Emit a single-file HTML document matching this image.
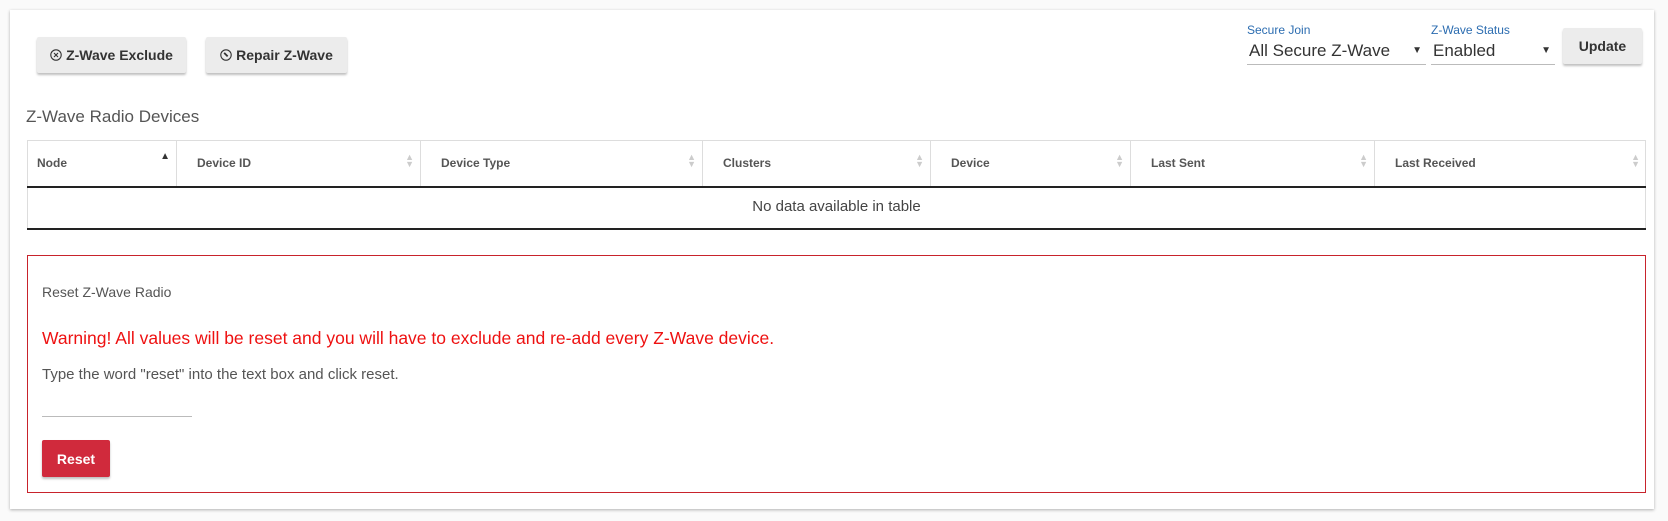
<!DOCTYPE html>
<html><head><meta charset="utf-8"><style>
*{box-sizing:border-box;margin:0;padding:0}
body{width:1668px;height:521px;background:#fafafa;font-family:"Liberation Sans",sans-serif;position:relative;overflow:hidden;color:#444}
.card{position:absolute;left:10px;top:10px;width:1644px;height:499px;background:#fff;box-shadow:0 1px 3px rgba(0,0,0,.3)}
.a{position:absolute}
.btn{position:absolute;background:#ececec;box-shadow:0 2px 2px rgba(0,0,0,.25);font-size:14px;font-weight:bold;color:#333;display:flex;align-items:center;justify-content:center;border-radius:2px}
.lbl{font-size:12px;color:#2b6cb0}
.sel{position:absolute;border-bottom:1px solid #bbb;font-size:17px;color:#333;height:28px}
.sel span.ar{position:absolute;right:4px;top:0px;font-size:10px;color:#333}
.th{position:absolute;top:140px;height:46px;border-left:1px solid #ddd;font-size:12px;font-weight:bold;color:#555;padding:16px 0 0 10px}
.srt{position:absolute;right:6px;top:14px;font-size:9px;color:#ccc;line-height:7px}
</style></head><body>
<div class="card"></div>
<div class="btn" style="left:37px;top:37px;width:149px;height:36px"><svg width="12" height="12" viewBox="0 0 12 12" style="margin-right:4px"><circle cx="6" cy="6" r="5.2" fill="none" stroke="#333" stroke-width="1.1"/><path d="M4 4l4 4M8 4l-4 4" stroke="#333" stroke-width="1.1"/></svg>Z-Wave Exclude</div>
<div class="btn" style="left:206px;top:37px;width:141px;height:36px"><svg width="12" height="12" viewBox="0 0 12 12" style="margin-right:4px"><circle cx="6" cy="6" r="5.2" fill="none" stroke="#333" stroke-width="1.1"/><path d="M3.5 4.5l3.5 3.5 1.3-1.3-3.5-3.5z" fill="#333"/></svg>Repair Z-Wave</div>
<div class="a lbl" style="left:1247px;top:23px">Secure Join</div>
<div class="sel" style="left:1247px;top:37px;width:179px;padding-left:2px;line-height:28px">All Secure Z-Wave<span class="ar">▼</span></div>
<div class="a lbl" style="left:1431px;top:23px">Z-Wave Status</div>
<div class="sel" style="left:1431px;top:37px;width:124px;padding-left:2px;line-height:28px">Enabled<span class="ar">▼</span></div>
<div class="btn" style="left:1563px;top:28px;width:79px;height:36px">Update</div>
<div class="a" style="left:26px;top:107px;font-size:17px;color:#555">Z-Wave Radio Devices</div>
<div class="a" style="left:27px;top:140px;width:1619px;height:89px;border:1px solid #ddd;border-bottom:none"></div>
<div class="th" style="left:27px;width:149px;border-left:none">Node<span class="srt" style="color:#333;top:13px;font-size:10px">▲</span></div>
<div class="th" style="left:176px;width:244px;padding-left:20px">Device ID<span class="srt">▲<br>▼</span></div>
<div class="th" style="left:420px;width:282px;padding-left:20px">Device Type<span class="srt">▲<br>▼</span></div>
<div class="th" style="left:702px;width:228px;padding-left:20px">Clusters<span class="srt">▲<br>▼</span></div>
<div class="th" style="left:930px;width:200px;padding-left:20px">Device<span class="srt">▲<br>▼</span></div>
<div class="th" style="left:1130px;width:244px;padding-left:20px">Last Sent<span class="srt">▲<br>▼</span></div>
<div class="th" style="left:1374px;width:272px;padding-left:20px">Last Received<span class="srt">▲<br>▼</span></div>
<div class="a" style="left:27px;top:186px;width:1619px;height:2px;background:#222"></div>
<div class="a" style="left:27px;top:198px;width:1619px;text-align:center;font-size:15px;color:#444">No data available in table</div>
<div class="a" style="left:27px;top:228px;width:1619px;height:2px;background:#222"></div>
<div class="a" style="left:27px;top:255px;width:1619px;height:238px;border:1px solid #c8232c"></div>
<div class="a" style="left:42px;top:284px;font-size:14px;color:#555">Reset Z-Wave Radio</div>
<div class="a" style="left:42px;top:328px;font-size:17.5px;color:#e11">Warning! All values will be reset and you will have to exclude and re-add every Z-Wave device.</div>
<div class="a" style="left:42px;top:366px;font-size:15px;color:#555">Type the word "reset" into the text box and click reset.</div>
<div class="a" style="left:42px;top:416px;width:150px;height:1px;background:#bbb"></div>
<div class="btn" style="left:42px;top:440px;width:68px;height:37px;background:#d02a3c;color:#fff">Reset</div>
</body></html>
